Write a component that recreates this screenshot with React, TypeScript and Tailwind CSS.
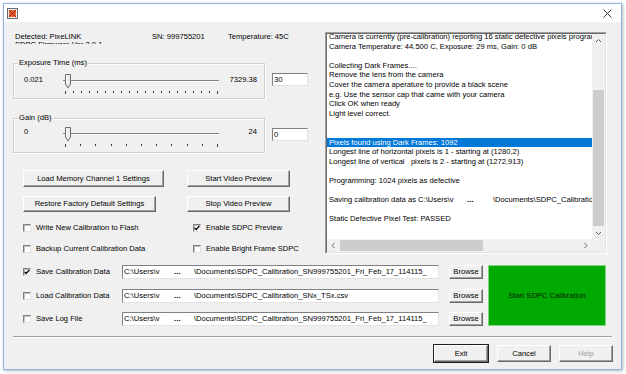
import React from "react";

const logLines = [
  "Camera is currently (pre-calibration) reporting 16 static defective pixels programmed",
  "Camera Temperature: 44.500 C, Exposure: 29 ms, Gain: 0 dB",
  "",
  "Collecting Dark Frames....",
  "Remove the lens from the camera",
  "Cover the camera aperature to provide a black scene",
  "e.g. Use the sensor cap that came with your camera",
  "Click OK when ready",
  "Light level correct.",
  "",
  "",
  "Pixels found using Dark Frames: 1092",
  "Longest line of horizontal pixels is 1 - starting at (1280,2)",
  "Longest line of vertical   pixels is 2 - starting at (1272,913)",
  "",
  "Programming: 1024 pixels as defective",
  "",
  "SAVING",
  "",
  "Static Defective Pixel Test: PASSED",
];

function Btn({
  className,
  children,
  isDefault,
  disabled,
}: {
  className: string;
  children: React.ReactNode;
  isDefault?: boolean;
  disabled?: boolean;
}) {
  return (
    <div
      className={`flex items-center justify-center bg-[#f0f0f0] border border-t-white border-l-white border-r-[#696969] border-b-[#696969] shadow-[inset_-1px_-1px_0_#a0a0a0] ${
        isDefault ? "outline outline-1 outline-[#1f1f1f]" : ""
      } ${disabled ? "text-[#a0a0a0]" : "text-black"} ${className}`}
    >
      {children}
    </div>
  );
}

function Check({ checked }: { checked?: boolean }) {
  return (
    <div className="w-[8px] h-[8px] shrink-0 bg-white border border-t-[#808080] border-l-[#808080] border-r-[#e3e3e3] border-b-[#e3e3e3] shadow-[inset_1px_1px_0_#c0c0c0] flex items-center justify-center">
      {checked && (
        <svg width="6" height="6" viewBox="0 0 6 6">
          <path d="M0.6 2.8 L2.2 4.5 L5.4 1" stroke="#000" strokeWidth="1.2" fill="none" />
        </svg>
      )}
    </div>
  );
}

function Chevron({ dir }: { dir: "up" | "down" | "left" | "right" }) {
  const d = {
    up: "M1 4 L3.5 1.5 L6 4",
    down: "M1 2 L3.5 4.5 L6 2",
    left: "M4.5 1 L2 3.5 L4.5 6",
    right: "M2.5 1 L5 3.5 L2.5 6",
  }[dir];
  const vertical = dir === "up" || dir === "down";
  const w = 7;
  const h = vertical ? 6 : 7;
  return (
    <svg width={w} height={h} viewBox={`0 0 ${w} ${h}`}>
      <path d={d} stroke="#606060" strokeWidth="1" fill="none" />
    </svg>
  );
}

function Slider({ ticks }: { ticks: number }) {
  return (
    <div className="w-[156px] flex flex-col">
      <div className="relative h-[14px]">
        <div className="absolute left-0 right-0 top-[6px] h-[2px] border-t border-t-[#808080] border-b border-b-white" />
        <svg className="absolute left-[2px] top-0" width="6" height="15" viewBox="0 0 6 15">
          <polygon points="0.5,0.5 5.5,0.5 5.5,10 3,14 0.5,10" fill="#ececec" stroke="#6d6d6d" strokeWidth="1" />
          <path d="M1.5 1.5 L1.5 9.5" stroke="#ffffff" strokeWidth="1" />
        </svg>
      </div>
      <div className="mt-[3px] ml-[2px] w-[153px] flex justify-between items-start">
        {Array.from({ length: ticks }).map((_, i) => (
          <div
            key={i}
            className={`w-[1px] bg-[#3c3c3c] ${i === 0 || i === ticks - 1 ? "h-[3px]" : "h-[2px]"}`}
          />
        ))}
      </div>
    </div>
  );
}

function Group({
  label,
  min,
  max,
  ticks,
  value,
  tall,
}: {
  label: string;
  min: string;
  max: string;
  ticks: number;
  value: string;
  tall?: boolean;
}) {
  return (
    <div className="flex items-start">
      <div
        className={`relative w-[252px] border border-[#cfcfcf] shadow-[inset_1px_1px_0_white,1px_1px_0_white] flex ${
          tall ? "h-[36px]" : "h-[35px]"
        }`}
      >
        <div className="absolute left-[4px] top-[-6px] px-[1px] bg-[#f0f0f0] leading-[10px]">{label}</div>
        <div className={`w-[49px] pl-[10px] leading-[10px] ${tall ? "pt-[11px]" : "pt-[8px]"}`}>{min}</div>
        <div className={tall ? "pt-[10px]" : "pt-[8px]"}>
          <Slider ticks={ticks} />
        </div>
        <div className={`w-[38px] text-right leading-[10px] ${tall ? "pt-[11px]" : "pt-[8px]"}`}>{max}</div>
      </div>
      <div className="ml-[7px] mt-[10px] w-[36px] h-[13px] bg-white border border-t-[#808080] border-l-[#808080] border-r-[#e3e3e3] border-b-[#e3e3e3] leading-[11px] pl-[1px]">
        {value}
      </div>
    </div>
  );
}

function PathText({ tail }: { tail: string }) {
  return (
    <div className="whitespace-pre overflow-hidden leading-[12px] pl-[1px] flex">
      <span className="w-[50px] shrink-0">C:\Users\v</span>
      <span className="w-[20px] shrink-0 font-bold text-[8px]">...</span>
      <span>{tail}</span>
    </div>
  );
}

function FileRow({ label, checked, tail }: { label: string; checked?: boolean; tail: string }) {
  return (
    <div className="flex items-center h-[14px]">
      <div className="w-[109px] pl-[10px] flex items-center">
        <Check checked={checked} />
        <span className="ml-[5px] whitespace-nowrap leading-[10px]">{label}</span>
      </div>
      <div className="w-[317px] h-[14px] bg-white border border-t-[#808080] border-l-[#808080] border-r-[#e3e3e3] border-b-[#e3e3e3]">
        <PathText tail={tail} />
      </div>
      <Btn className="ml-[10px] w-[34px] h-[14px]">Browse</Btn>
    </div>
  );
}

function LogBox() {
  return (
    <div className="ml-[17px] w-[282px] h-[222px] border border-t-[#a0a0a0] border-l-[#a0a0a0] border-r-white border-b-white">
      <div className="w-full h-full border border-t-[#696969] border-l-[#696969] border-r-[#e3e3e3] border-b-[#e3e3e3] grid grid-cols-[1fr_13px] grid-rows-[1fr_13px]">
        <div className="bg-white overflow-hidden">
          <div className="mt-[-2px]">
            {logLines.map((l, i) => {
              if (l === "SAVING") {
                return (
                  <div key={i} className="whitespace-pre leading-[9.6px] h-[9.6px] pl-[2px] flex">
                    <span className="w-[138px] shrink-0">Saving calibration data as C:\Users\v</span>
                    <span className="w-[26px] shrink-0 font-bold text-[8px]">...</span>
                    <span>\Documents\SDPC_Calibration_SN999755201</span>
                  </div>
                );
              }
              return (
                <div
                  key={i}
                  className={`whitespace-pre leading-[9.6px] h-[9.6px] pl-[2px] ${
                    i === 11 ? "bg-[#0078d7] text-white" : ""
                  }`}
                >
                  {l}
                </div>
              );
            })}
          </div>
        </div>
        <div className="bg-[#f0f0f0] flex flex-col">
          <div className="h-[13px] flex items-center justify-center">
            <Chevron dir="up" />
          </div>
          <div className="flex-1 flex flex-col pt-[43px]">
            <div className="flex-1 mx-[1px] bg-[#cdcdcd]" />
          </div>
          <div className="h-[13px] flex items-center justify-center">
            <Chevron dir="down" />
          </div>
        </div>
        <div className="bg-[#f0f0f0] flex">
          <div className="w-[13px] flex items-center justify-center">
            <Chevron dir="left" />
          </div>
          <div className="flex-1 flex py-[1px]">
            <div className="w-[143px] bg-[#cdcdcd]" />
          </div>
          <div className="w-[13px] flex items-center justify-center">
            <Chevron dir="right" />
          </div>
        </div>
        <div className="bg-[#f0f0f0]" />
      </div>
    </div>
  );
}

export default function App() {
  return (
    <div className="w-[626px] h-[374px] bg-white pl-[3px] pt-[3px] font-['Liberation_Sans',Arial,sans-serif] text-[7.6px] text-black">
      <div className="w-[619px] h-[367px] flex flex-col border border-[#8cb6e6] shadow-[1px_1px_3px_rgba(0,0,0,0.3)]">
        {/* title bar */}
        <div className="h-[18px] bg-white flex items-center justify-between pl-[3px] pr-[9px]">
          <svg width="11" height="11" viewBox="0 0 11 11">
            <rect x="0.5" y="0.5" width="10" height="10" fill="#f4f4f4" stroke="#6b6b6b" />
            <rect x="2" y="2" width="7" height="7" fill="#e8642c" />
            <path d="M2 2 L9 9 M9 2 L2 9" stroke="#a01818" strokeWidth="1" />
          </svg>
          <svg width="9" height="9" viewBox="0 0 9 9">
            <path d="M0.5 0.5 L8.5 8.5 M8.5 0.5 L0.5 8.5" stroke="#333" strokeWidth="1" />
          </svg>
        </div>

        {/* client */}
        <div className="flex-1 bg-[#f0f0f0] flex flex-col pl-[9px] pr-[8px] pt-[10px]">
          <div className="flex">
            <div className="w-[295px] flex flex-col">
              <div className="flex h-[10px] leading-[10px] pl-[2px] whitespace-nowrap">
                <span className="w-[137px]">Detected: PixeLINK</span>
                <span className="w-[76px]">SN: 999755201</span>
                <span>Temperature: 45C</span>
              </div>
              <div className="h-[2px] overflow-hidden pl-[2px] leading-[8px] whitespace-nowrap">
                <div className="mt-[-1px]">SDPC Firmware Ver 2.0.1</div>
              </div>
              <div className="mt-[19px]">
                <Group label="Exposure Time (ms)" min="0.021" max="7329.38" ticks={20} value="30" tall />
              </div>
              <div className="mt-[19px]">
                <Group label="Gain (dB)" min="0" max="24" ticks={11} value="0" />
              </div>
              <div className="mt-[17px] flex pl-[10px]">
                <Btn className="w-[141px] h-[17px]">Load Memory Channel 1 Settings</Btn>
                <Btn className="ml-[23px] w-[103px] h-[17px]">Start Video Preview</Btn>
              </div>
              <div className="mt-[9px] flex pl-[10px]">
                <Btn className="w-[133px] h-[16px]">Restore Factory Default Settings</Btn>
                <Btn className="ml-[31px] w-[103px] h-[16px]">Stop Video Preview</Btn>
              </div>
              <div className="mt-[11px] flex items-center h-[10px] pl-[10px] leading-[10px]">
                <div className="w-[170px] flex items-center">
                  <Check />
                  <span className="ml-[5px]">Write New Calibration to Flash</span>
                </div>
                <Check checked />
                <span className="ml-[5px]">Enable SDPC Preview</span>
              </div>
              <div className="mt-[11px] flex items-center h-[10px] pl-[10px] leading-[10px]">
                <div className="w-[170px] flex items-center">
                  <Check />
                  <span className="ml-[5px]">Backup Current Calibration Data</span>
                </div>
                <Check />
                <span className="ml-[5px]">Enable Bright Frame SDPC</span>
              </div>
            </div>
            <LogBox />
          </div>

          <div className="mt-[11px] flex">
            <div className="flex flex-col gap-[9.5px]">
              <FileRow
                label="Save Calibration Data"
                checked
                tail="\Documents\SDPC_Calibration_SN999755201_Fri_Feb_17_114115_"
              />
              <FileRow label="Load Calibration Data" tail="\Documents\SDPC_Calibration_SNx_TSx.csv" />
              <FileRow
                label="Save Log File"
                tail="\Documents\SDPC_Calibration_SN999755201_Fri_Feb_17_114115_"
              />
            </div>
            <div className="ml-[5px] w-[118px] h-[61px] bg-[#00aa00] border border-[#7fd67f] flex items-center justify-center text-[#0a1a0a]">
              Start SDPC Calibration
            </div>
          </div>

          <div className="mt-[10px] w-[599px] h-[2px] border-t border-t-[#a0a0a0] border-b border-b-white" />

          <div className="mt-[7px] flex justify-end">
            <Btn className="w-[54px] h-[17px]" isDefault>
              Exit
            </Btn>
            <Btn className="ml-[9px] w-[54px] h-[17px]">Cancel</Btn>
            <Btn className="ml-[8px] w-[54px] h-[17px]" disabled>
              Help
            </Btn>
          </div>
        </div>
      </div>
    </div>
  );
}
